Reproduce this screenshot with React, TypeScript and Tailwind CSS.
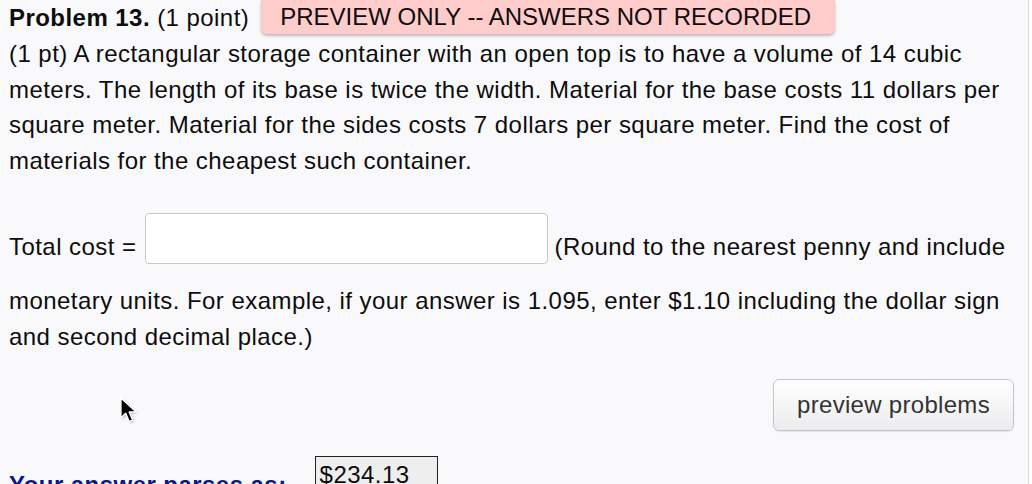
import React from 'react';

const Cursor = () => (
    <svg width="26" height="33" viewBox="0 0 22 28" className="absolute left-[115px] top-[392px]">
        <defs>
            <filter id="sh" x="-30%" y="-30%" width="160%" height="160%">
                <feGaussianBlur stdDeviation="1" />
            </filter>
        </defs>
        <path d="M5 5 L5 22 L9 18 L12 25 L15 24 L12 17 L18 17 Z" fill="#000" opacity="0.35" filter="url(#sh)" transform="translate(1 1)" />
        <path d="M5 5 L5 22 L9 18 L12 25 L15 24 L12 17 L18 17 Z" fill="#000" stroke="#fff" strokeWidth="1.2" strokeLinejoin="round" />
    </svg>
);

export default function App() {
    return (
        <div className="w-[1032px] h-[484px] overflow-hidden bg-white relative" style={{ fontFamily: '"Liberation Sans", Arial, sans-serif' }}>
            <div className="w-[1029px] h-full bg-[#f9f9fb] border-r border-[#dcdcdf] pl-[9px] text-[24px] tracking-[0.45px] text-[#0d0d0d] leading-[35.5px]">

                {/* header */}
                <div className="flex items-start h-[36px]">
                    <span className="whitespace-nowrap"><b>Problem 13.</b> (1 point)</span>
                    <div className="ml-[12px] h-[34px] bg-[#ffcccc] rounded-b-[6px] pl-[19px] pr-[24px] leading-[34px] tracking-normal whitespace-nowrap shadow-[0_2px_3px_rgba(0,0,0,0.25)]">
                        PREVIEW ONLY -- ANSWERS NOT RECORDED
                    </div>
                </div>

                {/* problem text */}
                <div className="whitespace-nowrap">
                    (1 pt) A rectangular storage container with an open top is to have a volume of 14 cubic<br />
                    meters. The length of its base is twice the width. Material for the base costs 11 dollars per<br />
                    square meter. Material for the sides costs 7 dollars per square meter. Find the cost of<br />
                    materials for the cheapest such container.
                </div>

                {/* answer row */}
                <div className="flex items-end mt-[35px] h-[51px]">
                    <span className="whitespace-nowrap">Total cost =</span>
                    <input type="text" className="ml-[9px] w-[403px] h-[51px] shrink-0 bg-white border border-[#c8c8cc] rounded-[4px] outline-none" />
                    <span className="ml-[6px] whitespace-nowrap">(Round to the nearest penny and include</span>
                </div>
                <div className="mt-[19px] whitespace-nowrap">
                    monetary units. For example, if your answer is 1.095, enter $1.10 including the dollar sign<br />
                    and second decimal place.)
                </div>

                {/* button */}
                <div className="flex justify-end pr-[14px] mt-[25px]">
                    <button className="w-[241px] h-[52px] rounded-[6px] border border-[#c4c4c8] bg-gradient-to-b from-white to-[#ececee] text-[#333] text-[24px] tracking-[0.3px] shadow-[0_1px_1px_rgba(0,0,0,0.08)]">
                        preview problems
                    </button>
                </div>

                {/* parsed answer */}
                <div className="flex items-start mt-[25px]">
                    <span className="mt-[11px] font-bold text-[#0a1490] whitespace-nowrap">Your answer parses as:</span>
                    <div className="ml-[28px] w-[123px] h-[40px] border-[1.5px] border-[#222] bg-[#eeeeef] pl-[4px] leading-[36px]">
                        $234.13
                    </div>
                </div>
            </div>
            <Cursor />
        </div>
    );
}
